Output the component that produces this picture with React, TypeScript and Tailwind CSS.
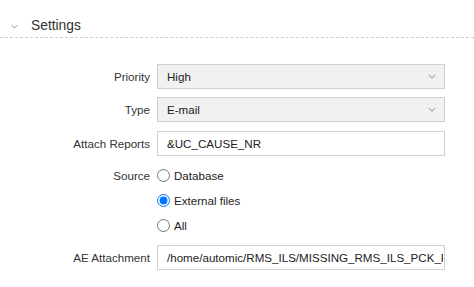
import React from "react";

const Chevron = ({ className }: { className?: string }) => (
  <svg viewBox="0 0 10 6" className={className} fill="none" stroke="currentColor" strokeWidth="1.4">
    <path d="M1 1l4 4 4-4" />
  </svg>
);

const Label = ({ children }: { children: React.ReactNode }) => (
  <div className="w-[157px] shrink-0 pr-[7px] text-right text-[#333]">{children}</div>
);

const App: React.FC = () => {
  return (
    <div
      className="w-[474px] h-[287px] bg-white overflow-hidden text-[11.6px]"
      style={{ fontFamily: '"Liberation Sans", Arial, sans-serif' }}
    >
      {/* Header */}
      <div className="flex items-center h-[38px] border-b border-dashed border-[#cfcfcf] pl-[11px] pt-[15px]">
        <Chevron className="w-[7px] h-[5px] text-[#888] mr-[13px]" />
        <span className="text-[13.8px] text-[#333]">Settings</span>
      </div>

      {/* Form */}
      <div className="pt-[26px]">
        <div className="flex items-center h-[25px]">
          <Label>Priority</Label>
          <div className="flex items-center justify-between w-[288px] h-[25px] bg-[#f1f1f1] border border-[#d0d0d0] pl-[9px] pr-[8px] text-[#222]">
            <span>High</span>
            <Chevron className="w-[8px] h-[5px] text-[#aaa]" />
          </div>
        </div>
        <div className="flex items-center h-[25px] mt-[8px]">
          <Label>Type</Label>
          <div className="flex items-center justify-between w-[288px] h-[25px] bg-[#f1f1f1] border border-[#d0d0d0] pl-[9px] pr-[8px] text-[#222]">
            <span>E-mail</span>
            <Chevron className="w-[8px] h-[5px] text-[#aaa]" />
          </div>
        </div>
        <div className="flex items-center h-[25px] mt-[9px]">
          <Label>Attach Reports</Label>
          <div className="flex items-center w-[288px] h-[25px] bg-white border border-[#d0d0d0] pl-[9px] text-[#222]">
            &amp;UC_CAUSE_NR
          </div>
        </div>

        <div className="flex mt-[7px]">
          <Label>
            <div className="h-[25px] flex items-center justify-end">Source</div>
          </Label>
          <div className="flex flex-col text-[#222]">
            {[
              { label: "Database", checked: false },
              { label: "External files", checked: true },
              { label: "All", checked: false },
            ].map((o) => (
              <label key={o.label} className="flex items-center h-[25px] gap-[4px]">
                <input
                  type="radio"
                  name="source"
                  defaultChecked={o.checked}
                  className="m-0 w-[13px] h-[13px]"
                />
                <span>{o.label}</span>
              </label>
            ))}
          </div>
        </div>

        <div className="flex items-center h-[25px] mt-[7px]">
          <Label>AE Attachment</Label>
          <div className="flex items-center w-[288px] h-[25px] bg-white border border-[#d0d0d0] pl-[9px] pr-[1px] text-[#222] overflow-hidden whitespace-nowrap">
            <span className="overflow-hidden">/home/automic/RMS_ILS/MISSING_RMS_ILS_PCK_RMS_ILS.txt</span>
          </div>
        </div>
      </div>
    </div>
  );
};

export default App;
